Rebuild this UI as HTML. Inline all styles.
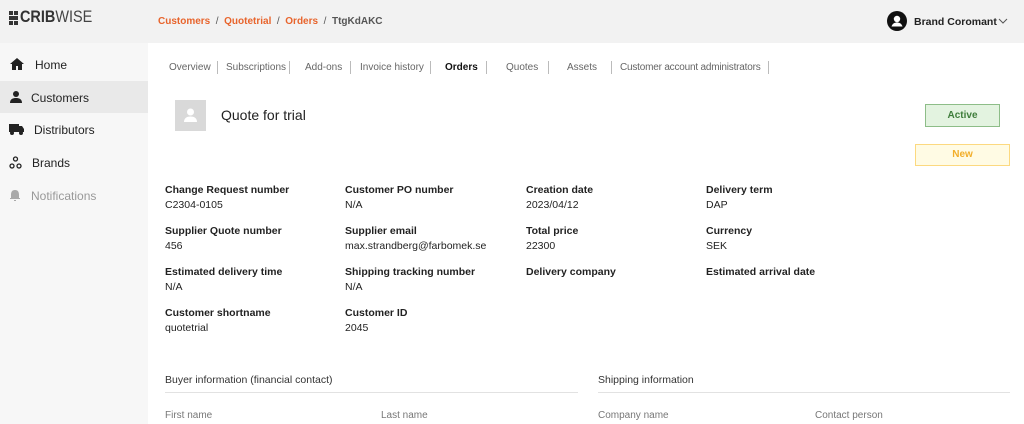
<!DOCTYPE html>
<html><head><meta charset="utf-8"><style>
*{margin:0;padding:0;box-sizing:border-box}
body{width:1024px;height:424px;overflow:hidden;font-family:"Liberation Sans",sans-serif;background:#fff;color:#222;position:relative}
.a{position:absolute;white-space:nowrap}
.top{position:absolute;left:0;top:0;width:1024px;height:43px;background:#f2f2f2}
.side{position:absolute;left:0;top:43px;width:148px;height:381px;background:#f7f7f7}
.nav{font-size:12px;color:#222}
.tab{font-size:10px;color:#666;top:62px}
.sep{position:absolute;top:61px;width:1px;height:13px;background:#bbb}
.lb{font-size:10.5px;font-weight:bold;color:#222}
.vl{font-size:10.5px;color:#222}
.g{font-size:10px;color:#777}
</style></head><body>
<div class="top"></div>
<svg class="a" style="left:9px;top:11px" width="10" height="14"><g fill="#333"><rect x="0" y="0" width="4" height="4"/><rect x="5" y="0" width="4" height="4"/><rect x="0" y="5" width="9" height="4"/><rect x="0" y="10" width="4" height="4"/><rect x="5" y="10" width="4" height="4"/></g></svg>
<div class="a" style="left:20px;top:7px;font-size:17px;font-weight:bold;color:#333;transform:scaleX(0.85);transform-origin:left top">CRIB<span style="font-weight:normal;color:#444">WISE</span></div>
<div class="a" style="left:158px;top:16px;font-size:10px;font-weight:bold;color:#e8642c">Customers <span style="color:#555;font-weight:normal">&nbsp;/&nbsp;</span> Quotetrial <span style="color:#555;font-weight:normal">&nbsp;/&nbsp;</span> Orders <span style="color:#555;font-weight:normal">&nbsp;/&nbsp;</span> <span style="color:#555">TtgKdAKC</span></div>
<svg class="a" style="left:887px;top:11px" width="20" height="20"><circle cx="10" cy="10" r="10" fill="#111"/><circle cx="10" cy="8" r="3.2" fill="#fff"/><path d="M4.5 15.5c1-3 3-4 5.5-4s4.5 1 5.5 4z" fill="#fff"/></svg>
<div class="a" style="left:914px;top:16px;font-size:10.5px;font-weight:bold;color:#222">Brand Coromant</div>
<svg class="a" style="left:998px;top:18px" width="10" height="7"><path d="M1 1l4 4 4-4" stroke="#555" fill="none"/></svg>

<div class="side"></div>
<div class="a" style="left:0;top:81px;width:148px;height:32px;background:#e9e9e9"></div>
<svg class="a" style="left:10px;top:58px" width="14" height="12"><path d="M7 0L0 6h2v6h4V8h2v4h4V6h2z" fill="#222"/></svg>
<div class="a nav" style="left:35px;top:58px">Home</div>
<svg class="a" style="left:10px;top:91px" width="12" height="12"><circle cx="6" cy="3" r="3" fill="#222"/><path d="M0 12c0-4 3-5 6-5s6 1 6 5z" fill="#222"/></svg>
<div class="a nav" style="left:31px;top:91px">Customers</div>
<svg class="a" style="left:9px;top:124px" width="15" height="11"><rect x="0" y="0" width="10" height="8" fill="#222"/><path d="M10 2h3l2 3v3h-5z" fill="#222"/><circle cx="3" cy="9" r="2" fill="#222"/><circle cx="12" cy="9" r="2" fill="#222"/></svg>
<div class="a nav" style="left:34px;top:123px">Distributors</div>
<svg class="a" style="left:9px;top:156px" width="13" height="13" fill="none" stroke="#222" stroke-width="1.3"><circle cx="6.5" cy="3" r="2"/><circle cx="3" cy="10" r="2"/><circle cx="10" cy="10" r="2"/></svg>
<div class="a nav" style="left:32px;top:156px">Brands</div>
<svg class="a" style="left:10px;top:190px" width="10" height="11"><path d="M5 0c3 0 4 2 4 5v3h1v1H0V8h1V5c0-3 1-5 4-5z M4 10h2v1H4z" fill="#aaa"/></svg>
<div class="a nav" style="left:31px;top:189px;color:#999">Notifications</div>

<div class="a tab" style="left:169px">Overview</div><div class="sep" style="left:217px"></div>
<div class="a tab" style="left:226px">Subscriptions</div><div class="sep" style="left:289px"></div>
<div class="a tab" style="left:305px">Add-ons</div><div class="sep" style="left:350px"></div>
<div class="a tab" style="left:360px">Invoice history</div><div class="sep" style="left:430px"></div>
<div class="a tab" style="left:445px;color:#111;font-weight:bold">Orders</div><div class="sep" style="left:486px"></div>
<div class="a tab" style="left:506px">Quotes</div><div class="sep" style="left:548px"></div>
<div class="a tab" style="left:567px">Assets</div><div class="sep" style="left:611px"></div>
<div class="a tab" style="left:620px;letter-spacing:-0.2px">Customer account administrators</div><div class="sep" style="left:768px"></div>

<div class="a" style="left:175px;top:100px;width:31px;height:31px;background:#d9d9d9"></div>
<svg class="a" style="left:181px;top:106px" width="19" height="19"><circle cx="9.5" cy="6" r="3.5" fill="#fff"/><path d="M3 16c0-4 3-5.5 6.5-5.5S16 12 16 16z" fill="#fff"/></svg>
<div class="a" style="left:221px;top:107px;font-size:14px;color:#222">Quote for trial</div>

<div class="a" style="left:925px;top:104px;width:75px;height:23px;background:#e3f3e0;border:1px solid #8dbd88;color:#3f7d3b;font-size:10px;font-weight:bold;text-align:center;line-height:21px">Active</div>
<div class="a" style="left:915px;top:144px;width:95px;height:22px;background:#fffbe4;border:1px solid #fcd980;color:#f2ae2a;font-size:10px;font-weight:bold;text-align:center;line-height:20px">New</div>

<div class="a lb" style="left:165px;top:184px">Change Request number</div><div class="a vl" style="left:165px;top:199px">C2304-0105</div>
<div class="a lb" style="left:345px;top:184px">Customer PO number</div><div class="a vl" style="left:345px;top:199px">N/A</div>
<div class="a lb" style="left:526px;top:184px">Creation date</div><div class="a vl" style="left:526px;top:199px">2023/04/12</div>
<div class="a lb" style="left:706px;top:184px">Delivery term</div><div class="a vl" style="left:706px;top:199px">DAP</div>

<div class="a lb" style="left:165px;top:225px">Supplier Quote number</div><div class="a vl" style="left:165px;top:240px">456</div>
<div class="a lb" style="left:345px;top:225px">Supplier email</div><div class="a vl" style="left:345px;top:240px">max.strandberg@farbomek.se</div>
<div class="a lb" style="left:526px;top:225px">Total price</div><div class="a vl" style="left:526px;top:240px">22300</div>
<div class="a lb" style="left:706px;top:225px">Currency</div><div class="a vl" style="left:706px;top:240px">SEK</div>

<div class="a lb" style="left:165px;top:266px">Estimated delivery time</div><div class="a vl" style="left:165px;top:281px">N/A</div>
<div class="a lb" style="left:345px;top:266px">Shipping tracking number</div><div class="a vl" style="left:345px;top:281px">N/A</div>
<div class="a lb" style="left:526px;top:266px">Delivery company</div>
<div class="a lb" style="left:706px;top:266px">Estimated arrival date</div>

<div class="a lb" style="left:165px;top:307px">Customer shortname</div><div class="a vl" style="left:165px;top:322px">quotetrial</div>
<div class="a lb" style="left:345px;top:307px">Customer ID</div><div class="a vl" style="left:345px;top:322px">2045</div>

<div class="a" style="left:165px;top:374px;font-size:10.5px;color:#333">Buyer information (financial contact)</div>
<div class="a" style="left:165px;top:392px;width:413px;height:1px;background:#e2e2e2"></div>
<div class="a" style="left:598px;top:374px;font-size:10.5px;color:#333">Shipping information</div>
<div class="a" style="left:598px;top:392px;width:412px;height:1px;background:#e2e2e2"></div>
<div class="a g" style="left:165px;top:410px">First name</div>
<div class="a g" style="left:381px;top:410px">Last name</div>
<div class="a g" style="left:598px;top:410px">Company name</div>
<div class="a g" style="left:815px;top:410px">Contact person</div>
</body></html>
